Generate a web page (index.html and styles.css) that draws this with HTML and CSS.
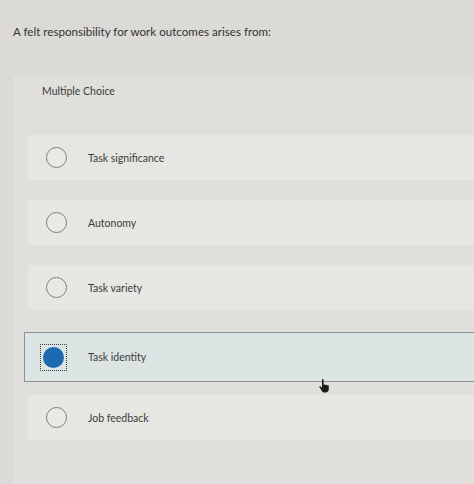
FILE: index.html
```html
<!DOCTYPE html>
<html lang="en">
<head>
    <meta charset="UTF-8">
    <meta name="viewport" content="width=device-width, initial-scale=1.0">
    <title>Question</title>
    <link rel="stylesheet" href="styles.css">
</head>
<body>
    <div class="page">
        <div class="question">A felt responsibility for work outcomes arises from:</div>
        <div class="panel">
            <div class="kind">Multiple Choice</div>
            <div class="options">
                <label class="option">
                    <span class="radio"></span>
                    <span class="label">Task significance</span>
                </label>
                <label class="option">
                    <span class="radio"></span>
                    <span class="label">Autonomy</span>
                </label>
                <label class="option">
                    <span class="radio"></span>
                    <span class="label">Task variety</span>
                </label>
                <label class="option selected">
                    <span class="focus"><span class="radio"></span></span>
                    <span class="label">Task identity</span>
                </label>
                <label class="option">
                    <span class="radio"></span>
                    <span class="label">Job feedback</span>
                </label>
            </div>
        </div>
        <!-- mouse pointer over the list -->
        <svg class="pointer" width="14" height="16" viewBox="0 0 14 16">
            <path d="M4 1.5c0-.8 1.6-.8 1.6 0V7l.4-.3c.4-.6 1.6-.3 1.6.4.4-.6 1.6-.3 1.6.4.4-.5 1.6-.3 1.6.5V11c0 2-1.3 3.6-3.3 3.6H6.5c-1.2 0-2-.7-2.6-1.6L1.4 9.3c-.4-.7.4-1.4 1.1-.9L4 9.8z" fill="#1c1c1c"/>
        </svg>
    </div>
</body>
</html>
```

FILE: styles.css
```css
/* General Styles */
body {
    margin: 0;
    padding: 0;
    background: #dbdad6;
    font-family: 'Lato', 'Open Sans', sans-serif;
    color: #333;
}

.page {
    position: relative;
    width: 474px;
    height: 484px;
    overflow: hidden;
}

/* Question */
.question {
    padding: 25px 13px 0;
    height: 50px;
    font-size: 11.6px;
}

/* Answer panel */
.panel {
    margin-left: 13px;
    height: 420px;
    background: #e0dfdb;
}

.kind {
    padding: 10px 29px 0;
    height: 50px;
    font-size: 10.5px;
    color: #3c3c3c;
}

.options {
    display: flex;
    flex-direction: column;
    gap: 20px;
    padding-left: 15px;
}

.option {
    display: flex;
    align-items: center;
    gap: 21px;
    height: 45px;
    padding-left: 18px;
    background: #e6e6e2;
    font-size: 10.5px;
    color: #3c3c3c;
}

.radio {
    width: 19px;
    height: 19px;
    border: 1px solid #7d7d7b;
    border-radius: 50%;
    background: #e9e9e6;
    flex-shrink: 0;
}

/* Selected answer */
.option.selected {
    margin: 2px 0 -7px -4px;
    height: 48px;
    padding-left: 15px;
    background: #dde4e4;
    border: 1px solid #8c9196;
    border-right: none;
}

.focus {
    display: flex;
    padding: 2px;
    border: 1px dotted #3a3f48;
}

.option.selected .radio {
    width: 21px;
    height: 21px;
    border: none;
    background: #1c6bb0;
}

.pointer {
    position: absolute;
    left: 318px;
    top: 378px;
}
```
